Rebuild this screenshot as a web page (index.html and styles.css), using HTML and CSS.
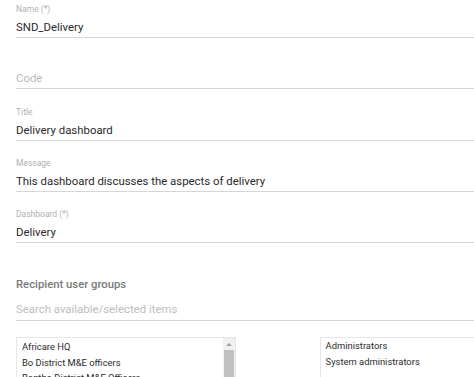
FILE: index.html
```html
<!DOCTYPE html>
<html>
<head>
<meta charset="utf-8">
<link rel="stylesheet" href="styles.css">
</head>
<body>
<div class="form">
  <div class="field">
    <div class="label">Name (*)</div>
    <div class="value">SND_Delivery</div>
  </div>
  <div class="field">
    <div class="label"></div>
    <div class="value placeholder">Code</div>
  </div>
  <div class="field">
    <div class="label">Title</div>
    <div class="value">Delivery dashboard</div>
  </div>
  <div class="field">
    <div class="label">Message</div>
    <div class="value">This dashboard discusses the aspects of delivery</div>
  </div>
  <div class="field">
    <div class="label">Dashboard (*)</div>
    <div class="value">Delivery</div>
  </div>

  <div class="section-title">Recipient user groups</div>
  <div class="search">Search available/selected items</div>

  <div class="lists">
    <div class="listbox left">
      <div class="items">
        <div class="item">Africare HQ</div>
        <div class="item">Bo District M&amp;E officers</div>
        <div class="item">Bontho District M&amp;E Officers</div>
      </div>
      <div class="scrollbar">
        <div class="arrow"></div>
        <div class="thumb"></div>
      </div>
    </div>
    <div class="listbox right">
      <div class="items">
        <div class="item">Administrators</div>
        <div class="item">System administrators</div>
      </div>
    </div>
  </div>
</div>
</body>
</html>
```
FILE: styles.css
```css
html, body {
  margin: 0;
  padding: 0;
  background: #ffffff;
  overflow: hidden;
}
body {
  font-family: Roboto, "Liberation Sans", sans-serif;
  color: #333333;
}
.form {
  padding-left: 16px;
  width: 600px;
}
.field {
  padding-top: 3px;
  padding-bottom: 1px;
  border-bottom: 1px solid #d6d6d6;
  margin-bottom: 13.25px;
}
.label {
  height: 12px;
  font-size: 8.5px;
  line-height: 12px;
  color: #b0b0b0;
}
.value {
  margin-top: 3px;
  height: 18px;
  font-size: 11.4px;
  line-height: 18px;
  color: #2a2a2a;
}
.value.placeholder {
  color: #b8b8b8;
}
.section-title {
  margin-top: 33px;
  height: 18px;
  font-size: 11.3px;
  line-height: 18px;
  font-weight: 500;
  color: #7a7a7a;
}
.search {
  margin-top: 6px;
  height: 18px;
  font-size: 11.4px;
  line-height: 18px;
  color: #bdbdbd;
  padding-bottom: 2px;
  border-bottom: 1px solid #d6d6d6;
}
.lists {
  margin-top: 16px;
  display: flex;
  gap: 84px;
}
.listbox {
  display: flex;
  height: 80px;
  border: 1px solid #e6e6e6;
  border-bottom: none;
}
.listbox.left {
  width: 221px;
}
.listbox.right {
  width: 300px;
  border-right: none;
}
.items {
  flex: 1;
  padding: 1px 0 0 5px;
  overflow: hidden;
}
.right .items {
  padding-top: 0;
}
.item {
  font-size: 9.4px;
  line-height: 15.5px;
  color: #2a2a2a;
  white-space: nowrap;
}
.scrollbar {
  width: 12px;
  background: #f1f1f1;
  display: flex;
  flex-direction: column;
  align-items: center;
}
.arrow {
  margin-top: 5px;
  width: 0;
  height: 0;
  border-left: 3px solid transparent;
  border-right: 3px solid transparent;
  border-bottom: 3px solid #a3a3a3;
}
.thumb {
  margin-top: 4px;
  width: 10px;
  flex: 1;
  background: #c1c1c1;
}
```
